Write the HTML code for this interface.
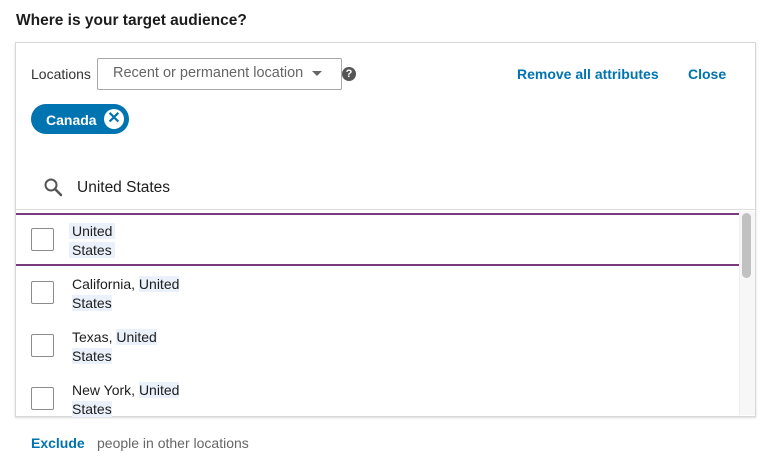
<!DOCTYPE html><html><head><style>
body{margin:0;width:768px;height:463px;background:#fff;font-family:"Liberation Sans",sans-serif;position:relative;overflow:hidden;color:#000}
.a{position:absolute}
.t{font-size:14px;color:#1d1d1d;line-height:19px}
.hl{background:#eaf1fb}
.cb{position:absolute;left:31px;width:21px;height:21px;border:1px solid #8c8c8c;border-radius:2px;background:#fff}
</style></head><body>
<div class="a" style="left:16px;top:12px;font-size:15.5px;font-weight:bold;color:#1d1d1d">Where is your target audience?</div>
<div class="a" style="left:15px;top:42px;width:739px;height:373px;border:1px solid #d8d8d8;box-shadow:0 1px 2px rgba(0,0,0,.15)"></div>
<div class="a" style="left:31px;top:66px;font-size:14px;color:#333">Locations</div>
<div class="a" style="left:97px;top:58px;width:243px;height:30px;border:1px solid #a8a8a8;border-radius:2px"></div>
<div class="a" style="left:113px;top:65px;font-size:14.5px;color:#666">Recent or permanent location</div>
<div class="a" style="left:312px;top:71px;width:0;height:0;border-left:5px solid transparent;border-right:5px solid transparent;border-top:5px solid #666"></div>
<div class="a" style="left:342px;top:67px;width:14px;height:14px;border-radius:50%;background:#555;color:#fff;font-size:11px;font-weight:bold;text-align:center;line-height:14px">?</div>
<div class="a" style="left:517px;top:66px;font-size:14px;font-weight:bold;color:#0073b1">Remove all attributes</div>
<div class="a" style="left:688px;top:66px;font-size:14px;font-weight:bold;color:#0073b1">Close</div>
<div class="a" style="left:31px;top:104px;width:98px;height:30px;border-radius:15px;background:#0073b1"></div>
<div class="a" style="left:46px;top:112px;font-size:14px;font-weight:bold;color:#fff">Canada</div>
<div class="a" style="left:104px;top:109px;width:20px;height:20px;border-radius:50%;background:#fff;color:#0073b1;font-size:16px;font-weight:bold;text-align:center;line-height:20px">✕</div>
<svg class="a" style="left:43px;top:177px" width="20" height="20" viewBox="0 0 20 20"><circle cx="8" cy="8" r="5.5" fill="none" stroke="#555" stroke-width="2"/><path d="M12 12l6 6" stroke="#555" stroke-width="2.5" stroke-linecap="round"/></svg>
<div class="a" style="left:77px;top:179px;font-size:15.5px;color:#1d1d1d">United States</div>
<div class="a" style="left:16px;top:209px;width:739px;height:1px;background:#ddd"></div>
<div class="a" style="left:16px;top:213px;width:723px;height:2px;background:#7a3a7e"></div>
<div class="a" style="left:16px;top:264px;width:723px;height:2px;background:#7a3a7e"></div>
<div class="a" style="left:739px;top:211px;width:15px;height:204px;background:#f7f7f7;border-left:1px solid #eee"></div>
<div class="a" style="left:742px;top:213px;width:9px;height:65px;border-radius:5px;background:#c1c1c1"></div>
<div class="cb" style="top:228px"></div>
<div class="a t" style="left:69px;top:222px"><span class="hl" style="padding:0 3px">United</span><br><span class="hl" style="padding:0 3px">States</span></div>
<div class="cb" style="top:281px"></div>
<div class="a t" style="left:72px;top:275px">California, <span class="hl">United</span><br><span class="hl">States</span></div>
<div class="cb" style="top:334px"></div>
<div class="a t" style="left:72px;top:328px">Texas, <span class="hl">United</span><br><span class="hl">States</span></div>
<div class="cb" style="top:387px"></div>
<div class="a t" style="left:72px;top:381px">New York, <span class="hl">United</span><br><span class="hl">States</span></div>
<div class="a" style="left:31px;top:435px;font-size:14px;font-weight:bold;color:#0073b1">Exclude</div>
<div class="a" style="left:97px;top:435px;font-size:14px;color:#666">people in other locations</div>
</body></html>
